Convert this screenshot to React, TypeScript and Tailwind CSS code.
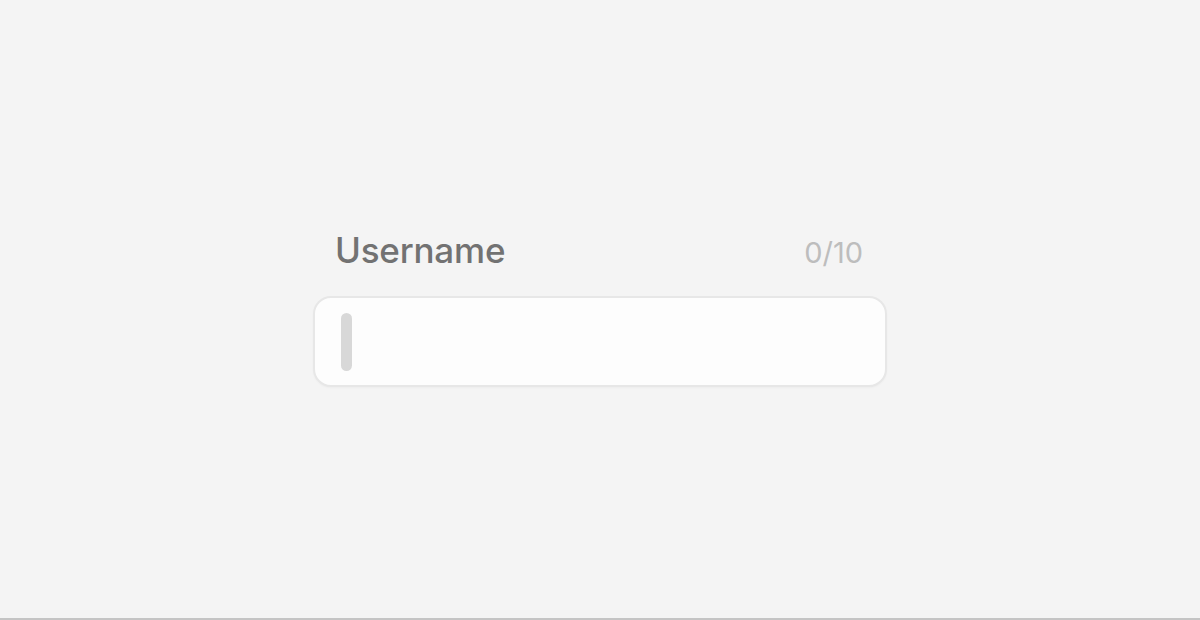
import React, { useState } from 'react';

export default function App() {
  const [value, setValue] = useState('');
  const max = 10;

  return (
    <div
      className="h-[620px] w-full bg-[#f4f4f4] border-b-2 border-[#c4c4c4] flex items-center justify-center"
      style={{ fontFamily: 'Inter, "Noto Sans", sans-serif' }}
    >
      <div className="w-[574px] flex flex-col mt-[2px]">
        <div className="flex items-end justify-between pl-[22px] pr-[24px] mb-[28px]">
          <span className="text-[35px] font-medium leading-none text-[#727272] tracking-[-0.2px]">Username</span>
          <span className="text-[29px] leading-none text-[#bdbdbd] mb-[1px]">
            {value.length}/{max}
          </span>
        </div>
        <label className="h-[91px] rounded-[18px] border-2 border-[#e7e7e7] bg-[#fdfdfd] shadow-[0_1px_2px_rgba(0,0,0,0.03)] flex items-center px-[26px]">
          {value.length === 0 && (
            <span className="w-[11px] h-[58px] rounded-full bg-[#d8d8d8] shrink-0" />
          )}
          <input
            value={value}
            maxLength={max}
            onChange={(e) => setValue(e.target.value)}
            className="flex-1 bg-transparent outline-none text-[28px] text-[#555] caret-transparent"
          />
        </label>
      </div>
    </div>
  );
}
